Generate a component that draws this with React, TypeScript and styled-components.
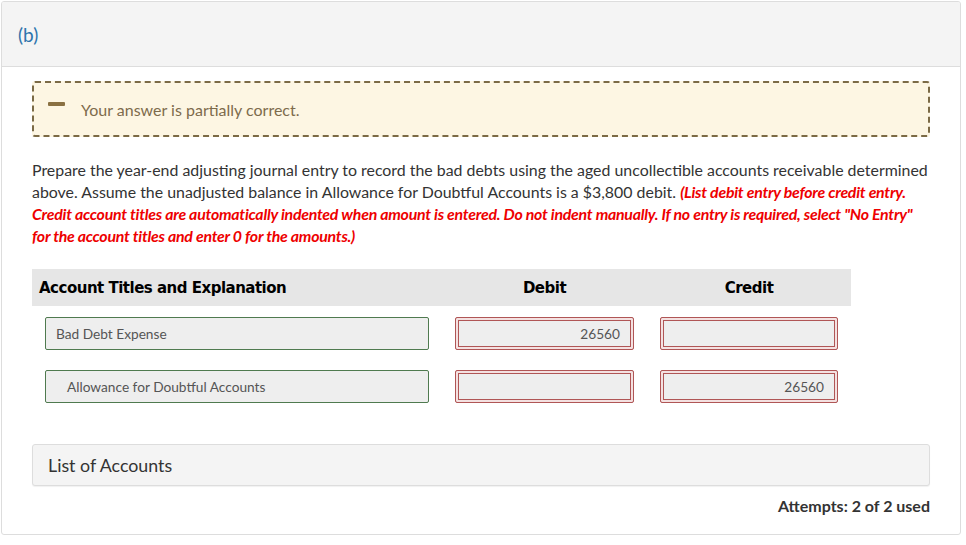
import React from "react";
import styled, { createGlobalStyle } from "styled-components";

const GlobalStyle = createGlobalStyle`
  html, body {
    margin: 0;
    padding: 0;
    background: #ffffff;
  }
  body {
    font-family: Lato, "Open Sans", "Liberation Sans", sans-serif;
    color: #333333;
  }
  * {
    box-sizing: border-box;
  }
`;

type Line = {
  account: string;
  indent?: boolean;
  debit?: string;
  credit?: string;
};

const lines: Line[] = [
  { account: "Bad Debt Expense", debit: "26560" },
  { account: "Allowance for Doubtful Accounts", indent: true, credit: "26560" },
];

export const App = () => {
  return (
    <>
      <GlobalStyle />
      <Card>
        <CardHeader>
          <PartLabel>(b)</PartLabel>
        </CardHeader>
        <CardBody>
          <Feedback>
            <MinusIcon />
            <FeedbackText>Your answer is partially correct.</FeedbackText>
          </Feedback>

          <Question>
            Prepare the year-end adjusting journal entry to record the bad debts using the aged
            uncollectible accounts receivable determined above. Assume the unadjusted balance in
            Allowance for Doubtful Accounts is a $3,800 debit.{" "}
            <Instruction>
              (List debit entry before credit entry. Credit account titles are automatically
              indented when amount is entered. Do not indent manually. If no entry is required,
              select "No Entry" for the account titles and enter 0 for the amounts.)
            </Instruction>
          </Question>

          <Journal>
            <HeadRow>
              <HeadCell>Account Titles and Explanation</HeadCell>
              <HeadCell $center>Debit</HeadCell>
              <HeadCell $center>Credit</HeadCell>
            </HeadRow>
            <Rows>
              {lines.map((line) => (
                <EntryRow key={line.account}>
                  <Cell>
                    <AccountField $indent={line.indent}>{line.account}</AccountField>
                  </Cell>
                  <Cell>
                    <AmountField>{line.debit}</AmountField>
                  </Cell>
                  <Cell>
                    <AmountField>{line.credit}</AmountField>
                  </Cell>
                </EntryRow>
              ))}
            </Rows>
          </Journal>

          <AccountsPanel>List of Accounts</AccountsPanel>

          <Attempts>Attempts: 2 of 2 used</Attempts>
        </CardBody>
      </Card>
    </>
  );
};

export default App;

const Card = styled.div`
  margin: 1px 0 0 1px;
  width: 960px;
  height: 534px;
  border: 1px solid #dddddd;
  border-radius: 3px;
  background: #ffffff;
  overflow: hidden;
`;

const CardHeader = styled.div`
  height: 65px;
  background: #f4f4f4;
  border-bottom: 1px solid #dddddd;
  display: flex;
  align-items: center;
  padding: 0 16px;
`;

const PartLabel = styled.div`
  font-size: 19px;
  color: #2f75ad;
`;

const CardBody = styled.div`
  padding: 14px 30px 0 30px;
`;

const Feedback = styled.div`
  height: 56px;
  width: 898px;
  border: 2px dashed #7b6a45;
  border-radius: 3px;
  background: #fdf6e3;
  display: flex;
  align-items: center;
  padding: 0 0 0 14px;
`;

const MinusIcon = styled.span`
  display: inline-block;
  width: 17px;
  height: 4px;
  border-radius: 1px;
  background: #8a7142;
  margin: -10px 16px 0 0;
`;

const FeedbackText = styled.span`
  font-size: 16px;
  color: #7d6b4c;
`;

const Question = styled.p`
  margin: 22px 0 0 0;
  font-size: 15.9px;
  line-height: 22px;
  color: #333333;
  width: 898px;
`;

const Instruction = styled.span`
  color: #ee0000;
  font-weight: bold;
  font-style: italic;
  letter-spacing: -0.25px;
`;

const Journal = styled.div`
  margin-top: 22px;
  width: 819px;
`;

const HeadRow = styled.div`
  display: grid;
  grid-template-columns: 410px 205px 204px;
  height: 37px;
  background: #e6e6e6;
  align-items: center;
`;

const HeadCell = styled.div<{ $center?: boolean }>`
  font-family: "DejaVu Sans", Tahoma, sans-serif;
  font-weight: bold;
  font-size: 15px;
  letter-spacing: -0.5px;
  color: #000000;
  padding: 0 7px;
  text-align: ${(p) => (p.$center ? "center" : "left")};
`;

const Rows = styled.div`
  display: flex;
  flex-direction: column;
  gap: 20px;
  padding-top: 11px;
`;

const EntryRow = styled.div`
  display: grid;
  grid-template-columns: 410px 205px 204px;
`;

const Cell = styled.div`
  padding: 0 13px;
`;

const AccountField = styled.div<{ $indent?: boolean }>`
  height: 33px;
  border: 1px solid #4f7a4f;
  border-radius: 2px;
  background: #eeeeee;
  font-size: 13.7px;
  color: #555555;
  display: flex;
  align-items: center;
  padding-left: ${(p) => (p.$indent ? "21px" : "10px")};
`;

const AmountField = styled.div`
  height: 33px;
  border: 1px solid #b05656;
  border-radius: 2px;
  background: #eeeeee;
  box-shadow: inset 0 0 0 2px #f4e1e1, inset 0 0 0 3px #b05656;
  font-size: 13.7px;
  color: #555555;
  display: flex;
  align-items: center;
  justify-content: flex-end;
  padding-right: 13px;
`;

const AccountsPanel = styled.div`
  margin-top: 41px;
  width: 898px;
  height: 42px;
  background: #f4f4f4;
  border: 1px solid #dddddd;
  border-radius: 3px;
  box-shadow: 0 1px 1px rgba(0, 0, 0, 0.06);
  display: flex;
  align-items: center;
  padding-left: 15px;
  font-size: 17.8px;
  color: #333333;
`;

const Attempts = styled.div`
  width: 898px;
  margin-top: 10px;
  text-align: right;
  font-size: 16px;
  font-weight: bold;
  color: #333333;
`;
